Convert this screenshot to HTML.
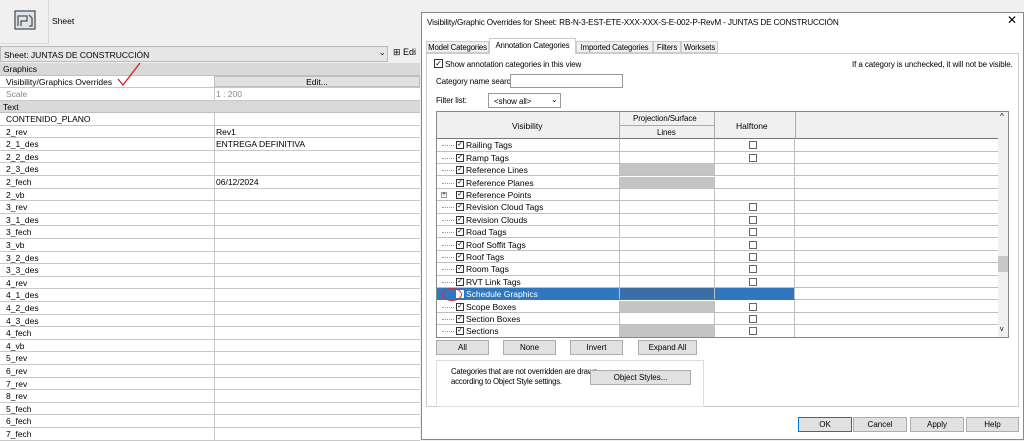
<!DOCTYPE html>
<html><head><meta charset="utf-8"><style>
*{margin:0;padding:0;box-sizing:border-box}
body{width:1024px;height:440px;overflow:hidden;background:#f0f0f0;font-family:"Liberation Sans",sans-serif;font-size:8.5px;color:#000;position:relative}
.a{position:absolute}
.s{font-size:8px;letter-spacing:-0.1px;white-space:nowrap}
.lr{position:absolute;left:0;width:420px;height:12.6px;border-bottom:1px solid #c8c8c8;background:#fff}
.lr span{position:absolute;left:6px;top:1px}
.lr i{position:absolute;left:214px;top:0;bottom:0;border-left:1px solid #c8c8c8}
.lr b{font-weight:normal;position:absolute;left:216px;top:1px}
.tr{position:absolute;left:437px;width:561px;height:12.4px;border-bottom:1px solid #c0c0c0;background:#fff}
.tr .c1{position:absolute;left:182px;top:0;bottom:0;width:96px;border-left:1px solid #c0c0c0;border-right:1px solid #c0c0c0}
.tr .c2{position:absolute;left:278px;top:0;bottom:0;width:80px;border-right:1px solid #c0c0c0}
.tr .cb{position:absolute;left:19px;top:2px;width:8px;height:8px;border:1px solid #333;background:#fff;font-size:7px;line-height:6px;text-align:center}
.tr .hb{position:absolute;left:34px;top:2px;width:8px;height:8px;border:1px solid #666;background:#fff}
.tr .lbl{position:absolute;left:29px;top:1px}
.tr .dot{position:absolute;left:5px;top:6px;width:12px;border-top:1px dotted #999}
.btn{position:absolute;height:15px;background:#e1e1e1;border:1px solid #adadad;text-align:center;line-height:13px;font-size:8px}
.tab{position:absolute;top:41px;height:12px;border:1px solid #ccc;background:#f0f0f0;line-height:11px;font-size:7.8px;letter-spacing:-0.15px;text-align:center;white-space:nowrap;overflow:hidden}
</style></head><body>
<div class="a" style="left:0;top:0;width:49px;height:44px;border-right:1px solid #d8d8d8;border-bottom:1px solid #d8d8d8"></div>
<svg class="a" style="left:14px;top:10px" width="22" height="20" viewBox="0 0 22 20"><rect x="1" y="1" width="20" height="18" fill="#dfe4ea" stroke="#555" stroke-width="1.3"/><path d="M4 16V6h9v5H7v5M15 5l3 3v8h-3" fill="none" stroke="#555" stroke-width="1.3"/></svg>
<div class="a" style="left:52px;top:16px">Sheet</div>
<div class="a" style="left:0;top:46px;width:388px;height:16px;background:#e6e6e6;border:1px solid #bbb"><span class="a" style="left:3px;top:3px">Sheet: JUNTAS DE CONSTRUCCIÓN</span><span class="a" style="left:378px;top:1px;font-size:8px">⌄</span></div>
<div class="a" style="left:393px;top:47px;font-size:9px">⊞ Edi</div>
<div class="a" style="left:0;top:63px;width:420px;height:12.5px;background:#d9d9d9;border-bottom:1px solid #c0c0c0"><span class="a" style="left:3px;top:1px">Graphics</span></div>
<div class="lr" style="top:75.5px"><span>Visibility/Graphics Overrides</span><i></i><b style="left:214px;width:206px;height:11px;top:0;background:#e1e1e1;text-align:center;border:1px solid #c0c0c0">Edit...</b></div>
<svg class="a" style="left:114px;top:60px" width="30" height="28"><path d="M4 19 L9 25 L26 3" fill="none" stroke="#d02020" stroke-width="1.3"/></svg>
<div class="lr" style="top:88px;color:#888"><span>Scale</span><i></i><b>1 : 200</b></div>
<div class="a" style="left:0;top:100.5px;width:420px;height:12.5px;background:#d9d9d9;border-bottom:1px solid #c0c0c0"><span class="a" style="left:3px;top:1px">Text</span></div>
<div class="lr" style="top:113px"><span>CONTENIDO_PLANO</span><i></i></div>
<div class="lr" style="top:125.6px"><span>2_rev</span><i></i><b>Rev1</b></div>
<div class="lr" style="top:138.2px"><span>2_1_des</span><i></i><b>ENTREGA DEFINITIVA</b></div>
<div class="lr" style="top:150.8px"><span>2_2_des</span><i></i></div>
<div class="lr" style="top:163.4px"><span>2_3_des</span><i></i></div>
<div class="lr" style="top:176px"><span>2_fech</span><i></i><b>06/12/2024</b></div>
<div class="lr" style="top:188.6px"><span>2_vb</span><i></i></div>
<div class="lr" style="top:201.2px"><span>3_rev</span><i></i></div>
<div class="lr" style="top:213.8px"><span>3_1_des</span><i></i></div>
<div class="lr" style="top:226.4px"><span>3_fech</span><i></i></div>
<div class="lr" style="top:239px"><span>3_vb</span><i></i></div>
<div class="lr" style="top:251.6px"><span>3_2_des</span><i></i></div>
<div class="lr" style="top:264.2px"><span>3_3_des</span><i></i></div>
<div class="lr" style="top:276.8px"><span>4_rev</span><i></i></div>
<div class="lr" style="top:289.4px"><span>4_1_des</span><i></i></div>
<div class="lr" style="top:302px"><span>4_2_des</span><i></i></div>
<div class="lr" style="top:314.6px"><span>4_3_des</span><i></i></div>
<div class="lr" style="top:327.2px"><span>4_fech</span><i></i></div>
<div class="lr" style="top:339.8px"><span>4_vb</span><i></i></div>
<div class="lr" style="top:352.4px"><span>5_rev</span><i></i></div>
<div class="lr" style="top:365px"><span>6_rev</span><i></i></div>
<div class="lr" style="top:377.6px"><span>7_rev</span><i></i></div>
<div class="lr" style="top:390.2px"><span>8_rev</span><i></i></div>
<div class="lr" style="top:402.8px"><span>5_fech</span><i></i></div>
<div class="lr" style="top:415.4px"><span>6_fech</span><i></i></div>
<div class="lr" style="top:428px"><span>7_fech</span><i></i></div>

<div class="a" style="left:421px;top:12px;width:603px;height:428px;background:#fff;border:1px solid #888"></div>
<div class="a s" style="left:427px;top:18px;font-size:8.2px;letter-spacing:-0.15px">Visibility/Graphic Overrides for Sheet: RB-N-3-EST-ETE-XXX-XXX-S-E-002-P-RevM - JUNTAS DE CONSTRUCCIÓN</div>
<div class="a" style="left:1007px;top:13px;font-size:12px">✕</div>
<div class="a" style="left:426px;top:53px;width:593px;height:354px;border:1px solid #ccc;background:#fff"></div>
<div class="tab" style="left:426px;width:63px">Model Categories</div>
<div class="tab" style="left:489px;top:38px;width:87px;height:16px;background:#fff;border-bottom:none;line-height:14px">Annotation Categories</div>
<div class="tab" style="left:576px;width:77px">Imported Categories</div>
<div class="tab" style="left:653px;width:28px">Filters</div>
<div class="tab" style="left:681px;width:37px">Worksets</div>
<div class="a" style="left:434px;top:59px;width:9px;height:9px;border:1px solid #333;font-size:8px;line-height:7px;text-align:center">✓</div>
<div class="a s" style="left:445px;top:60px">Show annotation categories in this view</div>
<div class="a s" style="left:852px;top:60px">If a category is unchecked, it will not be visible.</div>
<div class="a s" style="left:436px;top:77px">Category name search:</div>
<div class="a" style="left:510px;top:74px;width:113px;height:14px;border:1px solid #999;background:#fff"></div>
<div class="a s" style="left:436px;top:96px">Filter list:</div>
<div class="a s" style="left:488px;top:93px;width:73px;height:15px;border:1px solid #999;background:#fff;padding:3px 0 0 5px">&lt;show all&gt;<span class="a" style="left:62px;top:1px">⌄</span></div>
<div class="a" style="left:436px;top:111px;width:573px;height:227px;border:1px solid #888;background:#fff"></div>
<div class="a" style="left:437px;top:112px;width:561px;height:27px;background:#f0f0f0;border-bottom:1px solid #777"></div>
<div class="a" style="left:619px;top:112px;width:96px;height:27px;border-left:1px solid #aaa;border-right:1px solid #aaa"></div>
<div class="a" style="left:619px;top:125px;width:96px;border-top:1px solid #aaa"></div>
<div class="a" style="left:795px;top:112px;height:27px;border-left:1px solid #aaa"></div>
<div class="a" style="left:512px;top:121px">Visibility</div>
<div class="a s" style="left:633px;top:114px">Projection/Surface</div>
<div class="a s" style="left:657px;top:128px">Lines</div>
<div class="a" style="left:736px;top:121px">Halftone</div>
<div class="a" style="left:998px;top:112px;width:10px;height:225px;background:#f0f0f0"></div>
<div class="a" style="left:1000px;top:112px;font-size:8px">^</div>
<div class="a" style="left:998px;top:256px;width:10px;height:16px;background:#c8c8c8"></div>
<div class="a" style="left:1000px;top:326px;font-size:7px">v</div>
<div class="a" style="left:437px;top:139px;width:561px;height:198px;overflow:hidden">
<div style="position:relative;top:-139px;left:-437px">
<div class="tr" style="top:139.3px"><i class="dot"></i><div class="cb">✓</div><div class="lbl">Railing Tags</div><div class="c1"></div><div class="c2"><div class="hb"></div></div></div>
<div class="tr" style="top:151.7px"><i class="dot"></i><div class="cb">✓</div><div class="lbl">Ramp Tags</div><div class="c1"></div><div class="c2"><div class="hb"></div></div></div>
<div class="tr" style="top:164.1px"><i class="dot"></i><div class="cb">✓</div><div class="lbl">Reference Lines</div><div class="c1" style="background:#c4c4c4"></div><div class="c2"></div></div>
<div class="tr" style="top:176.5px"><i class="dot"></i><div class="cb">✓</div><div class="lbl">Reference Planes</div><div class="c1" style="background:#c4c4c4"></div><div class="c2"></div></div>
<div class="tr" style="top:188.9px"><div class="a" style="left:4px;top:3px;width:6px;height:6px;border:1px solid #999;font-size:6px;line-height:4px;text-align:center">+</div><div class="cb">✓</div><div class="lbl">Reference Points</div><div class="c1"></div><div class="c2"></div></div>
<div class="tr" style="top:201.3px"><i class="dot"></i><div class="cb">✓</div><div class="lbl">Revision Cloud Tags</div><div class="c1"></div><div class="c2"><div class="hb"></div></div></div>
<div class="tr" style="top:213.7px"><i class="dot"></i><div class="cb">✓</div><div class="lbl">Revision Clouds</div><div class="c1"></div><div class="c2"><div class="hb"></div></div></div>
<div class="tr" style="top:226.1px"><i class="dot"></i><div class="cb">✓</div><div class="lbl">Road Tags</div><div class="c1"></div><div class="c2"><div class="hb"></div></div></div>
<div class="tr" style="top:238.5px"><i class="dot"></i><div class="cb">✓</div><div class="lbl">Roof Soffit Tags</div><div class="c1"></div><div class="c2"><div class="hb"></div></div></div>
<div class="tr" style="top:250.9px"><i class="dot"></i><div class="cb">✓</div><div class="lbl">Roof Tags</div><div class="c1"></div><div class="c2"><div class="hb"></div></div></div>
<div class="tr" style="top:263.3px"><i class="dot"></i><div class="cb">✓</div><div class="lbl">Room Tags</div><div class="c1"></div><div class="c2"><div class="hb"></div></div></div>
<div class="tr" style="top:275.7px"><i class="dot"></i><div class="cb">✓</div><div class="lbl">RVT Link Tags</div><div class="c1"></div><div class="c2"><div class="hb"></div></div></div>
<div class="tr" style="top:288.1px"><div class="a" style="left:0;top:0;width:358px;height:12px;background:#2f78c0"></div><div class="cb" style="border-color:#fff"></div><div class="lbl" style="color:#fff">Schedule Graphics</div><div class="c1" style="background:#3a6ea8"></div><div class="c2"></div><div class="a" style="left:5px;top:0;width:20px;height:13px;border:1px solid #d03040;border-radius:50%"></div></div>
<div class="tr" style="top:300.5px"><i class="dot"></i><div class="cb">✓</div><div class="lbl">Scope Boxes</div><div class="c1" style="background:#c4c4c4"></div><div class="c2"><div class="hb"></div></div></div>
<div class="tr" style="top:312.9px"><i class="dot"></i><div class="cb">✓</div><div class="lbl">Section Boxes</div><div class="c1"></div><div class="c2"><div class="hb"></div></div></div>
<div class="tr" style="top:325.3px"><i class="dot"></i><div class="cb">✓</div><div class="lbl">Sections</div><div class="c1" style="background:#c4c4c4"></div><div class="c2"><div class="hb"></div></div></div>
</div></div>
<div class="btn" style="left:436px;top:340px;width:53px">All</div>
<div class="btn" style="left:503px;top:340px;width:53px">None</div>
<div class="btn" style="left:570px;top:340px;width:53px">Invert</div>
<div class="btn" style="left:638px;top:340px;width:59px">Expand All</div>
<div class="a" style="left:436px;top:360px;width:268px;height:47px;border:1px solid #ddd"></div>
<div class="a s" style="left:451px;top:367px;line-height:10px;font-size:7.8px;letter-spacing:-0.2px">Categories that are not overridden are drawn<br>according to Object Style settings.</div>
<div class="btn" style="left:590px;top:370px;width:101px">Object Styles...</div>
<div class="btn" style="left:798px;top:417px;width:54px;border:1px solid #0078d7">OK</div>
<div class="btn" style="left:853px;top:417px;width:54px">Cancel</div>
<div class="btn" style="left:910px;top:417px;width:54px">Apply</div>
<div class="btn" style="left:966px;top:417px;width:53px">Help</div>
</body></html>
